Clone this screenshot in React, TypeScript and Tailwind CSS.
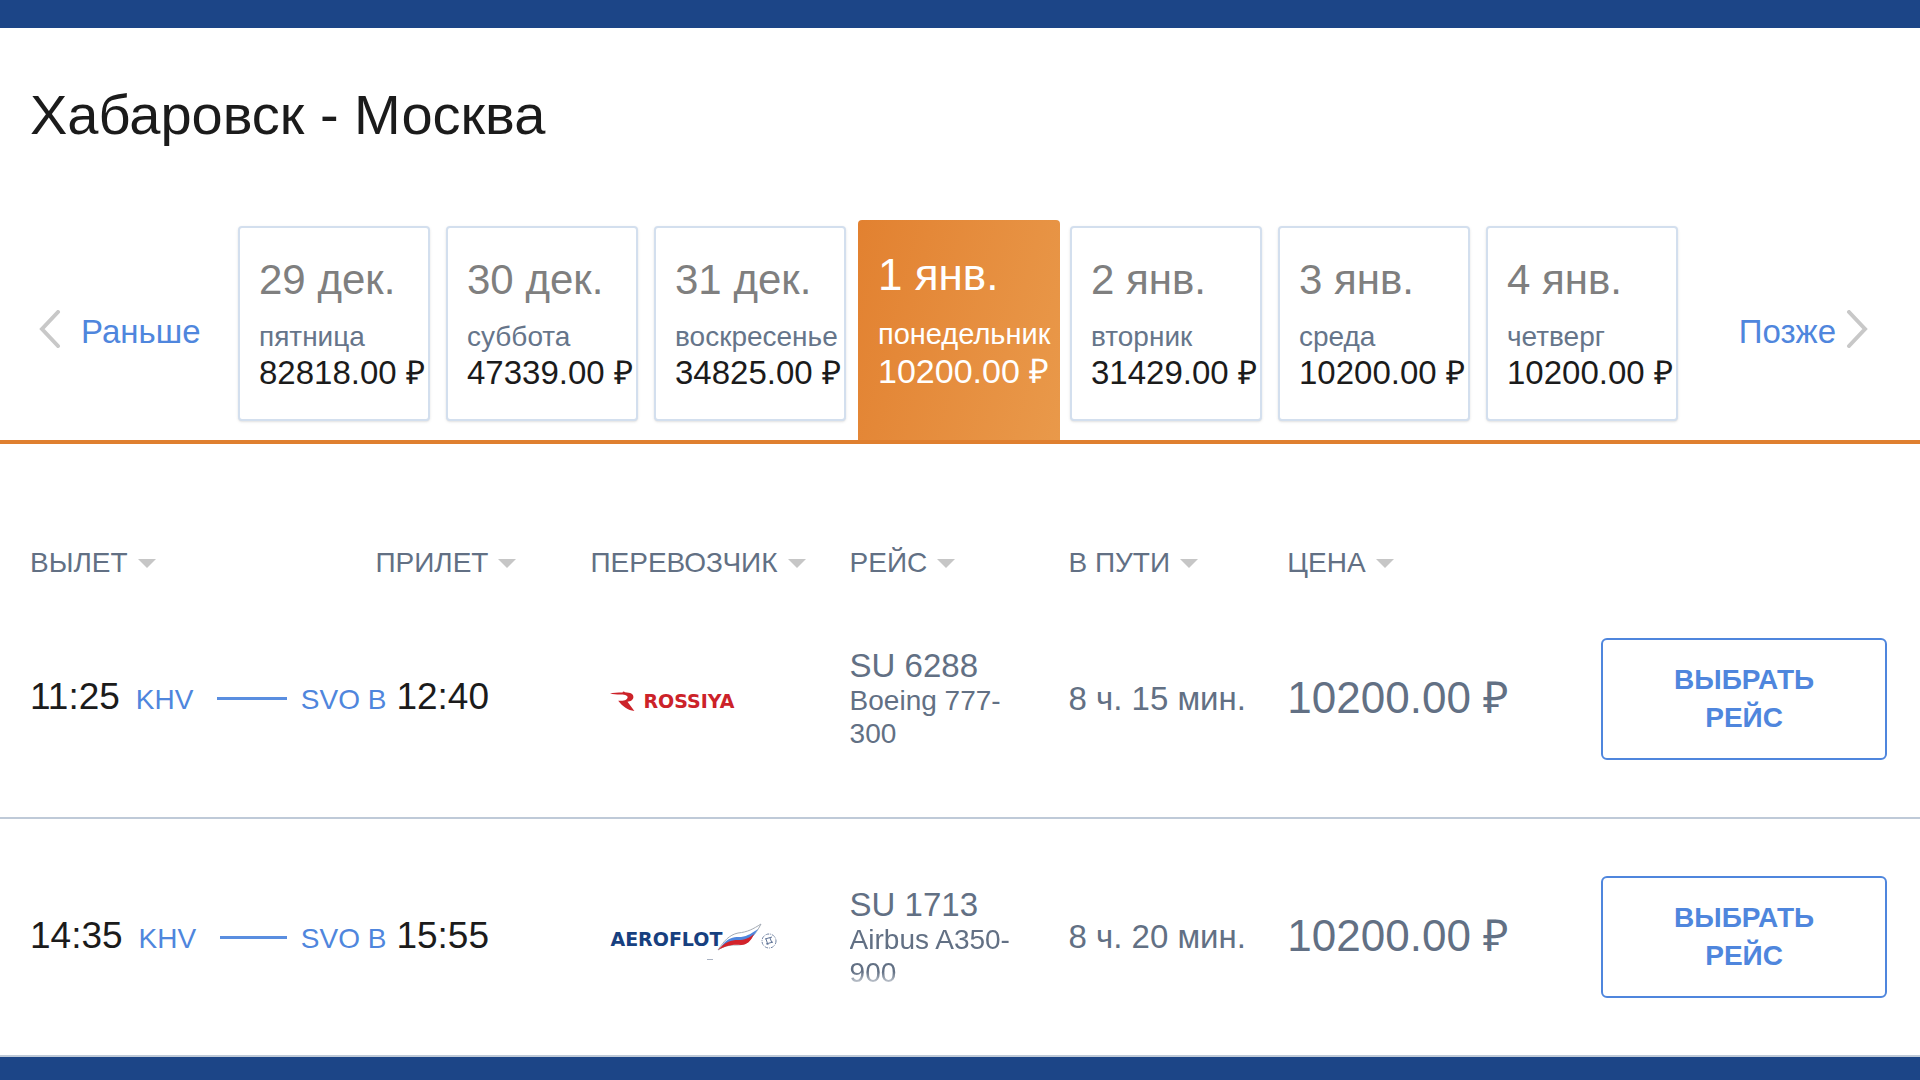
// Страница выбора рейса: лента дат с ценами и таблица рейсов
import clsx from 'clsx'

interface Day {
  date: string
  weekday: string
  price: string
}

interface Flight {
  departure: string
  from: string
  arrival: string
  to: string
  carrier: 'rossiya' | 'aeroflot'
  number: string
  aircraft: string
  duration: string
  price: string
}

const DAYS: Day[] = [
  { date: '29 дек.', weekday: 'пятница', price: '82818.00' },
  { date: '30 дек.', weekday: 'суббота', price: '47339.00' },
  { date: '31 дек.', weekday: 'воскресенье', price: '34825.00' },
  { date: '1 янв.', weekday: 'понедельник', price: '10200.00' },
  { date: '2 янв.', weekday: 'вторник', price: '31429.00' },
  { date: '3 янв.', weekday: 'среда', price: '10200.00' },
  { date: '4 янв.', weekday: 'четверг', price: '10200.00' },
]

const ACTIVE_DAY = '1 янв.'

const HEADERS = [
  { label: 'Вылет', width: 'w-[19.5%]' },
  { label: 'Прилет', width: 'w-[11.2%]' },
  { label: 'Перевозчик', width: 'w-[13.5%]' },
  { label: 'Рейс', width: 'w-[11.4%]' },
  { label: 'В пути', width: 'w-[11.4%]' },
  { label: 'Цена', width: 'w-[16.4%]' },
]

const FLIGHTS: Flight[] = [
  {
    departure: '11:25',
    from: 'KHV',
    arrival: '12:40',
    to: 'SVO B',
    carrier: 'rossiya',
    number: 'SU 6288',
    aircraft: 'Boeing 777-300',
    duration: '8 ч. 15 мин.',
    price: '10200.00',
  },
  {
    departure: '14:35',
    from: 'KHV',
    arrival: '15:55',
    to: 'SVO B',
    carrier: 'aeroflot',
    number: 'SU 1713',
    aircraft: 'Airbus A350-900',
    duration: '8 ч. 20 мин.',
    price: '10200.00',
  },
]

function Chevron({ direction }: { direction: 'left' | 'right' }) {
  return (
    <svg width="22" height="38" viewBox="0 0 22 38" fill="none" aria-hidden="true">
      <path
        d={direction === 'left' ? 'M19 2 L3 19 L19 36' : 'M3 2 L19 19 L3 36'}
        stroke="#c8c8c8"
        strokeWidth="4"
        strokeLinecap="round"
      />
    </svg>
  )
}

function RossiyaLogo() {
  return (
    <div className="flex items-center gap-2 pt-1 text-[#cc2229]">
      <svg width="25" height="20" viewBox="0 0 25 20" fill="currentColor" aria-hidden="true">
        <path d="M0 2.600 C3 1.600 8 1.600 12.500 1.500 C12.800 .3 14 0 15 1.300 C20.500 1.500 23.600 3 23.400 6.200 C23.200 9 20.500 10.300 17.500 10.800 L24.400 20 C18 19.500 12.600 15.500 8.200 9.800 C12.600 10 17.400 9.200 17.600 6.400 C17.800 4 13.500 3.500 10 3.500 C6.500 3.500 3 3.500 0 2.600 Z" />
      </svg>
      <span className="font-['DejaVu_Sans',sans-serif] text-[19px] leading-5 font-bold">ROSSIYA</span>
    </div>
  )
}

function AeroflotLogo() {
  return (
    <div className="flex items-center pt-1 text-[#17407f]">
      <span className="font-['DejaVu_Sans',sans-serif] text-[19px] leading-5 font-bold">AEROFLOT</span>
      <svg className="-ml-5" width="76" height="44" viewBox="0 0 76 44" fill="none" aria-hidden="true">
        <path d="M16 33 C22 24 27 18 36 16 C46 15 51 12 59 7 C56 13 53 17 50 20 C46 27 40 28 34 28 C27 28 22 29 16 33 Z" fill="#fff" stroke="#a4abb5" strokeWidth="1" />
        <path d="M22 26 C28 20 33 20 39 20 C46 19 50 16 56 12 L52 18 C46 24 41 24 36 24 C30 24 25 26 19 30 Z" fill="#4f86dd" />
        <path d="M16 33 C23 25 29 23 36 23 C43 23 47 21 52 17 C49 24 45 28 39 28 C33 27 24 28 16 33 Z" fill="#d3222a" />
        <circle cx="67" cy="24" r="7" stroke="#6d7fa0" strokeWidth="1" strokeDasharray="3 1 1 1" />
        <path d="M63 22 L70 20 M64 27 L71 25 M64 22 L66 28 M68 21 L70 26" stroke="#5f7396" strokeWidth="1" />
        <path d="M5 42.500 h6" stroke="#a9b2c2" strokeWidth="1" />
      </svg>
    </div>
  )
}

function Price({ value }: { value: string }) {
  return (
    <>
      {value} <span className="font-['Open_Sans',sans-serif]">₽</span>
    </>
  )
}

function DayCard({ day, active }: { day: Day; active: boolean }) {
  return (
    <button
      type="button"
      aria-pressed={active}
      className={clsx(
        'flex flex-col items-start text-left whitespace-nowrap',
        active
          ? '-mr-[6px] -ml-1 h-[220px] w-[202px] rounded-t bg-linear-105 from-[#e28130] to-[#e9994a] pt-[29px] pl-5 text-white'
          : 'mt-[6px] h-[195px] w-48 rounded border-2 border-[#d3dfee] bg-white pt-[26px] pl-[19px] shadow-sm',
      )}
    >
      <span className={active ? 'text-[44px] leading-[52px]' : 'text-[42px] leading-[52px] text-[#7f7f7f]'}>
        {day.date}
      </span>
      <span className={active ? 'mt-[15px] text-[29px] leading-9' : 'mt-[13px] text-[28px] leading-9 text-[#66758a]'}>
        {day.weekday}
      </span>
      <span className={active ? 'text-[34px] leading-9' : 'text-[33px] leading-[34px] text-[#1b1b1b]'}>
        <Price value={day.price} />
      </span>
    </button>
  )
}

function FlightRow({ flight, last }: { flight: Flight; last: boolean }) {
  return (
    <tr className="h-[238px] border-b-2 border-[#bfcad8]">
      <td colSpan={2} className="pl-[30px]">
        <div className="flex max-w-[459px] items-baseline text-[28px] leading-10 text-[#4f86dd]">
          <span className="text-[37px] text-[#1b1b1b]">{flight.departure}</span>
          <span className="ml-4">{flight.from}</span>
          <span className="mr-[14px] ml-6 h-[3px] flex-1 self-center bg-[#5a8ee0]" />
          <span>{flight.to}</span>
          <span className="ml-[10px] text-[37px] text-[#1b1b1b]">{flight.arrival}</span>
        </div>
      </td>
      <td className="pl-[21px]">{flight.carrier === 'rossiya' ? <RossiyaLogo /> : <AeroflotLogo />}</td>
      <td className="pt-[2px] pr-10 pl-px leading-[33px]">
        <div className="mb-[2px] text-[33px]">{flight.number}</div>
        <div className={clsx('text-[28px]', last && '[mask-image:linear-gradient(to_bottom,#000_74%,transparent_100%)]')}>
          {flight.aircraft}
        </div>
      </td>
      <td className="pl-px text-[33px] whitespace-nowrap">{flight.duration}</td>
      <td className="pb-1 pl-px text-[44px] leading-[52px] whitespace-nowrap">
        <Price value={flight.price} />
      </td>
      <td className="pr-[33px]">
        <button
          type="button"
          className="h-[122px] w-full rounded-md border-2 border-[#4f86dd] px-12 text-[28px] leading-[38px] font-bold text-[#4f86dd] uppercase"
        >
          Выбрать рейс
        </button>
      </td>
    </tr>
  )
}

export default function App() {
  return (
    <div className="min-h-screen bg-[#1c4587] pt-7 font-['Liberation_Sans',Arial,sans-serif]">
      <main className="bg-white">
        <h1 className="px-[30px] pt-[55px] text-[56px] leading-[64px] text-[#1b1b1b]">Хабаровск - Москва</h1>

        {/* Лента дат */}
        <section className="mt-[73px] flex justify-between border-b-4 border-[#df7f2f]">
          <a href="#earlier" className="mt-[90px] ml-[39px] flex h-[38px] w-[199px] items-center gap-5 text-[33px] text-[#4f86dd]">
            <Chevron direction="left" />
            <span className="pt-[6px]">Раньше</span>
          </a>
          <div className="flex items-start gap-4">
            {DAYS.map((day) => (
              <DayCard key={day.date} day={day} active={day.date === ACTIVE_DAY} />
            ))}
          </div>
          <a href="#later" className="mt-[90px] mr-[52px] flex h-[38px] w-[190px] items-center justify-end gap-[10px] text-[33px] text-[#4f86dd]">
            <span className="pt-[6px]">Позже</span>
            <Chevron direction="right" />
          </a>
        </section>

        {/* Рейсы */}
        <table className="mt-[102px] w-full table-fixed border-collapse text-left text-[#627084]">
          <thead>
            <tr className="h-[34px]">
              {HEADERS.map((header, i) => (
                <th key={header.label} className={clsx('font-normal', header.width, i === 0 ? 'pl-[30px]' : 'pl-px')}>
                  <button
                    type="button"
                    className="flex items-center gap-[10px] text-[28px] leading-[34px] whitespace-nowrap uppercase"
                  >
                    {header.label}
                    <svg width="18" height="9" viewBox="0 0 18 9" aria-hidden="true">
                      <path d="M0 0h18l-9 9z" fill="#c6c6c6" />
                    </svg>
                  </button>
                </th>
              ))}
              <th aria-label="Выбор" />
            </tr>
          </thead>
          <tbody>
            {FLIGHTS.map((flight, i) => (
              <FlightRow key={flight.number} flight={flight} last={i === FLIGHTS.length - 1} />
            ))}
          </tbody>
        </table>
      </main>
    </div>
  )
}
